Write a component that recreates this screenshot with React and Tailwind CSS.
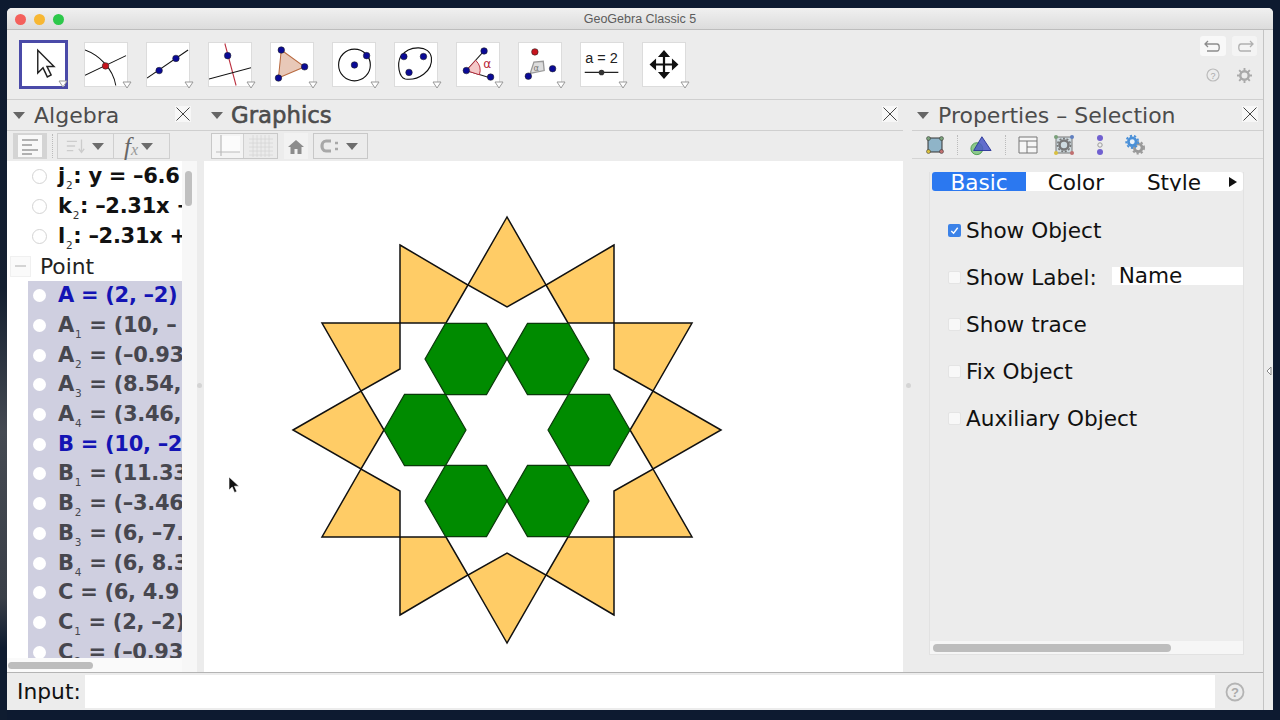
import React from "react";

const Dot = ({ x, y, r = 3.5, f = "#0a0a96" }) => <circle cx={x} cy={y} r={r} fill={f} stroke="#222" strokeWidth="0.6" />;

const ToolIcon = ({ active, children }) => (
  <div className={"relative shrink-0 " + (active ? "w-[49px] h-[49px] -mr-[2px] border-[3px] border-[#4a4aa8] bg-white" : "w-[44px] h-[45px] bg-white border border-[#dcdcdc]")}>
    <svg viewBox="0 0 45 45" className="w-full h-full block">{children}</svg>
    <svg viewBox="0 0 10 8" className={"absolute w-[10px] h-[8px] " + (active ? "right-[-3px] bottom-[-2px]" : "right-[-5px] bottom-[-3px]")}>
      <path d="M1 1H9L5 7Z" fill="#fff" stroke="#999" strokeWidth="1" />
    </svg>
  </div>
);

const tools = [
  <path key="a" d="M17 10V34L22.5 28.5L27 38L31 36L26.6 27H34Z" transform="translate(-0.5 -2.5)" fill="#fff" stroke="#222" strokeWidth="1.5" />,
  <g key="b"><path d="M0 7C14 12 30 26 33 45" fill="none" stroke="#111" strokeWidth="1.1" /><path d="M0 34L44 13" stroke="#111" strokeWidth="1.1" /><Dot x={22} y={24} f="#c8141e" /></g>,
  <g key="c"><path d="M0 37L44 7" stroke="#111" strokeWidth="1.1" /><Dot x={13} y={29} /><Dot x={31} y={16} /></g>,
  <g key="d"><path d="M17 0L29 45" stroke="#b82838" strokeWidth="1.1" /><path d="M0 38L45 26" stroke="#111" strokeWidth="1.1" /><Dot x={20} y={13} /></g>,
  <g key="e"><path d="M11 7L36 25L8 37Z" fill="#e8c8b8" stroke="#b86a40" strokeWidth="1.1" /><Dot x={11} y={7} /><Dot x={36} y={25} /><Dot x={8} y={37} /></g>,
  <g key="f"><circle cx="23" cy="23" r="17" fill="none" stroke="#111" strokeWidth="1.2" /><Dot x={23} y={23} /><Dot x={36} y={13} /></g>,
  <g key="g"><path d="M6 14C16 1 37 2 39 15C41 30 24 40 11 38C4 36 2 22 6 14Z" fill="none" stroke="#111" strokeWidth="1.2" /><Dot x={9.5} y={14} /><Dot x={30.5} y={14} /><Dot x={15} y={31} /></g>,
  <g key="h"><path d="M10 29L29 8M10 29L36 37" stroke="#222" strokeWidth="1.1" /><path d="M10 29L20 18A15 15 0 0 1 24 33.5Z" fill="#f4c8c8" stroke="#b82838" strokeWidth="1" /><Dot x={10} y={29} /><Dot x={29} y={8} /><Dot x={36} y={36} /><text x="28" y="26" fontSize="13" fill="#b82838" fontFamily="DejaVu Sans">α</text></g>,
  <g key="i"><circle cx="17" cy="9" r="3.5" fill="#c8141e" stroke="#222" strokeWidth="0.6" /><path d="M12 32L16 20L26 19L27 29Z" fill="#ddd" stroke="#999" strokeWidth="1.4" /><text x="15.5" y="29" fontSize="9" fill="#777" fontFamily="DejaVu Sans">α</text><Dot x={10} y={35} /><Dot x={36} y={27} /></g>,
  <g key="j"><text x="22" y="21" textAnchor="middle" fontSize="15.5" fill="#222" fontFamily="Liberation Sans">a = 2</text><path d="M4 31H40" stroke="#222" strokeWidth="1.2" /><circle cx="22" cy="31" r="3" fill="#333" /></g>,
  <path key="k" d="M22.5 7L29 14.5H23.7V21.3H31V16L38 22.5L31 29V23.7H23.7V30.5H29L22.5 38L16 30.5H21.3V23.7H14V29L7 22.5L14 16V21.3H21.3V14.5H16Z" fill="#111" />,
];

const Close = ({ className = "" }) => (
  <svg viewBox="0 0 16 16" className={"w-[16px] h-[16px] shrink-0 -mt-[2px] " + className}>
    <rect x="0" y="0" width="16" height="16" fill="#f7f7f7" />
    <path d="M1.5 1.5L14.5 14.5M14.5 1.5L1.5 14.5" stroke="#444" strokeWidth="1" />
  </svg>
);

const Tri = () => (
  <svg viewBox="0 0 12 7" className="w-[12px] h-[7px] shrink-0"><path d="M0 0H12L6 7Z" fill="#666" /></svg>
);

const PanelHeader = ({ title, className = "", textClass = "ml-[9px] text-[22px]" }) => (
  <div className={"h-[31px] flex items-center border-b border-[#cfcfcf] " + className}>
    <Tri />
    <span className={"mt-[1px] leading-none text-[#4c4c4c] font-['DejaVu_Sans',sans-serif] " + textClass}>{title}</span>
    <span className="flex-1" />
    <Close />
  </div>
);

const Sub = ({ n, color }) => (
  <sub className="text-[10.5px] font-normal align-baseline relative top-[6px] mx-[1px]" style={{ color }}>{n}</sub>
);

const rows = [
  { l: "A", v: "= (2, –2)", blue: true },
  { l: "A", n: 1, v: "= (10, –" },
  { l: "A", n: 2, v: "= (–0.93" },
  { l: "A", n: 3, v: "= (8.54," },
  { l: "A", n: 4, v: "= (3.46," },
  { l: "B", v: "= (10, –2", blue: true },
  { l: "B", n: 1, v: "= (11.33" },
  { l: "B", n: 2, v: "= (–3.46" },
  { l: "B", n: 3, v: "= (6, –7." },
  { l: "B", n: 4, v: "= (6, 8.3" },
  { l: "C", v: "= (6, 4.9" },
  { l: "C", n: 1, v: "= (2, –2)" },
  { l: "C", n: 2, v: "= (–0.93" },
];

const topRows = [
  { t: "j", n: 2, v: ": y = –6.6" },
  { t: "k", n: 2, v: ": –2.31x +" },
  { t: "l", n: 2, v: ": –2.31x +" },
];

const Caret = () => (
  <svg viewBox="0 0 12 7" className="w-[12px] h-[7px] shrink-0"><path d="M0 0H12L6 7Z" fill="#6c6c6c" /></svg>
);

const Algebra = () => (
  <div className="w-[197px] shrink-0 flex flex-col">
    <PanelHeader title="Algebra" className="pl-[6px] pr-[13px]" />
    <div className="h-[30px] flex items-center pl-[6px] bg-[#ececec]">
      <div className="w-[34px] h-[26px] bg-[#d4d4d4] flex items-center justify-center">
        <svg viewBox="0 0 24 22" className="w-[24px] h-[22px]"><rect width="24" height="22" fill="#f8f8f8" /><path d="M4 5H20M4 10H14M4 15H20M4 19H14" stroke="#999" strokeWidth="1.4" /></svg>
      </div>
      <span className="ml-[5px] mr-[4px] h-[24px] border-l border-dotted border-[#bbb]" />
      <div className="h-[26px] flex border border-[#cfcfcf]">
        <div className="w-[56px] flex items-center pl-[7px] gap-[5px] border-r border-[#cfcfcf]">
          <svg viewBox="0 0 24 20" className="w-[22px] h-[20px]"><path d="M2 5H13M2 10H11M2 15H9M18 3V16M15 13L18 17L21 13" fill="none" stroke="#ccc" strokeWidth="1.4" /></svg>
          <Caret />
        </div>
        <div className="w-[55px] flex items-center pl-[10px] gap-[3px]">
          <span className="font-['Liberation_Serif',serif] italic text-[25px] text-[#666] leading-none">f<span className="text-[16px] text-[#999]">x</span></span>
          <Caret />
        </div>
      </div>
    </div>
    <div className="flex-1 flex min-h-0">
      <div className="w-[175px] shrink-0 bg-white flex flex-col min-h-0 overflow-hidden">
        <div className="h-[497px] overflow-hidden font-['DejaVu_Sans',sans-serif]">
          {topRows.map((r) => (
            <div key={r.t} className="h-[30px] flex items-center pl-[25px] overflow-hidden whitespace-nowrap">
              <span className="w-[15px] h-[15px] rounded-full border-[1.5px] border-[#d4d4d4] bg-white shrink-0" />
              <span className="ml-[11px] font-bold text-[21px] text-[#111] tracking-[-0.3px] leading-none">{r.t}<Sub n={r.n} color="#333" />{r.v}</span>
            </div>
          ))}
          <div className="h-[30px] flex items-center pl-[3px]">
            <span className="w-[21px] h-[21px] bg-[#fafafa] border border-[#f0f0f0] flex items-center justify-center">
              <span className="w-[11px] h-[2px] bg-[#d4d4d4]" />
            </span>
            <span className="ml-[9px] mt-[1px] text-[21.8px] text-[#222] leading-none">Point</span>
          </div>
          <div className="ml-[21px] bg-[#cfcfe0] overflow-hidden">
            {rows.map((r, i) => (
              <div key={i} className="h-[29.7px] flex items-center pl-[5px] overflow-hidden whitespace-nowrap">
                <span className="w-[13px] h-[13px] rounded-full bg-white shrink-0" />
                <span className={"ml-[12px] font-bold text-[21px] tracking-[-0.3px] leading-none " + (r.blue ? "text-[#1414b4]" : "text-[#47474f]")}>
                  {r.l}{r.n ? <Sub n={r.n} color="#47474f" /> : null} {r.v}
                </span>
              </div>
            ))}
          </div>
        </div>
        <div className="flex-1 flex items-center pl-[1px] bg-[#fafafa]">
          <div className="w-[85px] h-[7px] rounded-full bg-[#bdbdbd]" />
        </div>
      </div>
      <div className="w-[15px] shrink-0 bg-[#f7f7f7] relative">
        <div className="absolute left-[3px] top-[10px] w-[7px] h-[35px] rounded-full bg-[#c0c0c0]" />
      </div>
      <div className="w-[7px] shrink-0 bg-[#ececec] relative">
        <div className="absolute left-[0px] top-[222px] w-[5px] h-[5px] rounded-full bg-[#d4d4d4]" />
      </div>
    </div>
  </div>
);

const hexes = [[466, 359], [548, 359], [425, 430], [589, 430], [466, 501], [548, 501]];
const hexPts = ([x, y]) => [[-41, 0], [-20.5, -35.6], [20.5, -35.6], [41, 0], [20.5, 35.6], [-20.5, 35.6]].map(([a, b]) => `${x + a},${y + b}`).join(" ");
const quarter = [
  [[507, 217], [468, 285], [507, 307], [546, 285]],
  [[400, 245], [468, 285], [446, 323], [400, 323]],
  [[322, 323], [400, 323], [400, 369], [361, 391]],
  [[293, 430], [361, 391], [384, 430], [361, 469]],
];
const kites = [];
quarter.forEach((k, i) => {
  kites.push(k);
  if (i === 1 || i === 2) {
    kites.push(k.map(([x, y]) => [1014 - x, y]));
    kites.push(k.map(([x, y]) => [x, 860 - y]));
    kites.push(k.map(([x, y]) => [1014 - x, 860 - y]));
  }
  if (i === 0) kites.push(k.map(([x, y]) => [x, 860 - y]));
  if (i === 3) kites.push(k.map(([x, y]) => [1014 - x, y]));
});

const Graphics = () => (
  <div className="w-[699px] shrink-0 flex flex-col">
    <PanelHeader title="Graphics" className="pl-[7px] pr-[5px]" textClass="ml-[8px] text-[22.8px] [-webkit-text-stroke:0.6px_#4c4c4c]" />
    <div className="h-[30px] flex items-center pl-[7px] bg-[#ececec]">
      <div className="h-[26px] flex border border-[#c8c8c8]">
        <div className="w-[32px] flex items-center justify-center border-r border-[#d0d0d0] bg-[#f4f4f4]">
          <svg viewBox="0 0 26 22" className="w-[26px] h-[22px]"><rect x="6" y="1" width="19" height="16" fill="#fbfbfb" /><path d="M6 0V21M1 17H25" stroke="#bbb" strokeWidth="1.2" fill="none" /></svg>
        </div>
        <div className="w-[33px] flex items-center justify-center bg-[#ebebeb]">
          <svg viewBox="0 0 24 22" className="w-[24px] h-[22px]"><path d="M0 4H24M0 8H24M0 12H24M0 16H24M0 20H24M4 0V22M8 0V22M12 0V22M16 0V22M20 0V22" stroke="#d6d6d6" strokeWidth="0.8" /></svg>
        </div>
      </div>
      <div className="ml-[6px] w-[24px] h-[26px] flex items-center justify-center bg-[#f2f2f2]">
        <svg viewBox="0 0 16 15" className="w-[16px] h-[15px]"><path d="M8 1L16 8H13.5V15H9.5V10H6.5V15H2.5V8H0Z" fill="#8c8c8c" /></svg>
      </div>
      <div className="ml-[5px] w-[55px] h-[26px] flex items-center pl-[6px] gap-[4px] border border-[#c8c8c8]">
        <svg viewBox="0 0 22 16" className="w-[22px] h-[16px]"><path d="M11 3H6C3 3 2 6 2 8C2 10 3 13 6 13H11" fill="none" stroke="#a8a8a8" strokeWidth="3.2" /><path d="M15 5H18M15 11H18" stroke="#a8a8a8" strokeWidth="2.4" /></svg>
        <Caret />
      </div>
    </div>
    <div className="flex-1 bg-white min-h-0">
      <svg viewBox="204 161 699 511" className="w-full h-full block">
        {kites.map((k, i) => (
          <polygon key={i} points={k.map((p) => p.join(",")).join(" ")} fill="#ffcc66" stroke="#111" strokeWidth="1.5" />
        ))}
        {hexes.map((h, i) => (
          <polygon key={i} points={hexPts(h)} fill="#008b00" stroke="#0a3a0a" strokeWidth="1.2" />
        ))}
      </svg>
    </div>
  </div>
);

const Sep = () => <span className="ml-[13px] mr-[12px] h-[20px] border-l border-dotted border-[#bbb]" />;

const PropIcons = () => (
  <div className="h-[28px] ml-[9px] flex items-center border-b border-[#d4d4d4] pl-[14px]">
    <svg viewBox="0 0 18 18" className="w-[18px] h-[18px]"><rect x="2" y="2" width="14" height="14" fill="#8fb4c8" stroke="#333" /><circle cx="2.5" cy="2.5" r="2" fill="#7aa07a" stroke="#333" strokeWidth="0.5" /><circle cx="15.5" cy="2.5" r="2" fill="#7aa07a" stroke="#333" strokeWidth="0.5" /><circle cx="2.5" cy="15.5" r="2" fill="#d8c040" stroke="#333" strokeWidth="0.5" /><circle cx="15.5" cy="15.5" r="2" fill="#c07070" stroke="#333" strokeWidth="0.5" /></svg>
    <Sep />
    <svg viewBox="0 0 24 22" className="w-[22px] h-[22px]"><circle cx="7.5" cy="15" r="6.5" fill="#8cc88c" stroke="#4a9a4a" /><path d="M13 2L23 17H4Z" fill="#4a58c8" fillOpacity="0.85" stroke="#2a3498" /></svg>
    <Sep />
    <svg viewBox="0 0 20 20" className="w-[20px] h-[20px]"><path d="M1 2H19V18H1ZM1 6H19M9 6V18M9 12H19" fill="#f6f6f6" stroke="#777" /></svg>
    <svg viewBox="0 0 22 22" className="ml-[15px] w-[22px] h-[22px]"><rect x="3" y="3" width="16" height="16" fill="#cfdbe0" stroke="#777" /><circle cx="11" cy="11" r="4.5" fill="none" stroke="#777" strokeWidth="2.6" /><circle cx="11" cy="11" r="6.5" fill="none" stroke="#777" strokeWidth="1.6" strokeDasharray="2 1.6" /><circle cx="3" cy="3" r="2" fill="#7aa07a" /><circle cx="19" cy="3" r="2" fill="#6080c0" /><circle cx="3" cy="19" r="2" fill="#d8c040" /><circle cx="19" cy="19" r="2" fill="#c07070" /></svg>
    <svg viewBox="0 0 8 22" className="ml-[21px] w-[8px] h-[22px]"><circle cx="4" cy="4" r="3" fill="#7060d0" /><circle cx="4" cy="11" r="2.2" fill="#f0f0f0" stroke="#999" /><circle cx="4" cy="18" r="3" fill="#7060d0" /></svg>
    <svg viewBox="0 0 24 24" className="ml-[20px] w-[22px] h-[22px]"><circle cx="15.5" cy="15" r="4.2" fill="none" stroke="#999" strokeWidth="3" /><circle cx="15.5" cy="15" r="6.4" fill="none" stroke="#999" strokeWidth="2" strokeDasharray="2.4 2.2" /><circle cx="9" cy="8.5" r="4.2" fill="#eaf2fa" stroke="#4a90d8" strokeWidth="3" /><circle cx="9" cy="8.5" r="6.6" fill="none" stroke="#4a90d8" strokeWidth="2" strokeDasharray="2.4 2.2" /></svg>
  </div>
);

const Check = ({ on }) =>
  on ? (
    <span className="w-[13px] h-[13px] rounded-[2px] bg-[#3b82e8] flex items-center justify-center shrink-0">
      <svg viewBox="0 0 12 12" className="w-[11px] h-[11px]"><path d="M2.5 6.5L5 9L9.5 3" fill="none" stroke="#fff" strokeWidth="1.5" /></svg>
    </span>
  ) : (
    <span className="w-[13px] h-[13px] rounded-[2px] bg-[#f8f8f8] border border-[#e4e4e4] shrink-0" />
  );

const options = [["Show Object", true], ["Show Label:", false], ["Show trace", false], ["Fix Object", false], ["Auxiliary Object", false]];

const Properties = () => (
  <div className="flex-1 min-w-0 flex flex-col relative">
    <div className="absolute left-[3px] top-[283px] w-[5px] h-[5px] rounded-full bg-[#d4d4d4]" />
    <div className="ml-[9px]"><PanelHeader title="Properties – Selection" className="pl-[5px] pr-[5px]" /></div>
    <PropIcons />
    <div className="flex-1 min-h-0 pl-[26px] pr-[19px] pt-[13px] pb-[17px] flex flex-col">
      <div className="flex-1 min-h-0 flex flex-col border-x border-b border-[#e2e2e2]">
        <div className="h-[19px] ml-[2px] flex bg-white rounded-[3px] overflow-hidden font-['DejaVu_Sans',sans-serif] text-[21.6px] leading-[22px] shrink-0">
          <div className="w-[94px] text-center bg-[#2b78f0] text-white">Basic</div>
          <div className="w-[100px] text-center text-[#111]">Color</div>
          <div className="w-[96px] text-center text-[#111]">Style</div>
          <div className="flex-1 flex items-center pl-[6px]"><svg viewBox="0 0 10 10" className="w-[10px] h-[10px]"><path d="M1 0L9 5L1 10Z" fill="#111" /></svg></div>
        </div>
        <div className="flex-1 min-h-0 pt-[16px] pl-[18px] flex flex-col">
          {options.map(([t, on], i) => (
            <div key={t} className="h-[47px] flex items-center gap-[5px] font-['DejaVu_Sans',sans-serif] text-[21.6px] text-[#111] whitespace-nowrap">
              <Check on={on} />
              <span className="leading-none">{t}</span>
              {i === 1 ? <span className="ml-[10px] flex-1 h-[18px] bg-white leading-[18px] pl-[7px] -mt-[3px]">Name</span> : null}
            </div>
          ))}
        </div>
        <div className="h-[13px] flex items-center bg-[#f6f6f6] shrink-0">
          <div className="w-[238px] h-[8px] rounded-full bg-[#bdbdbd] ml-[3px]" />
        </div>
      </div>
    </div>
  </div>
);

export default function App() {
  return (
    <div className="relative w-[1280px] h-[720px] overflow-hidden pl-[7px] pr-[7px] pt-[8px] pb-[10px] bg-[#0d1a30] bg-no-repeat bg-[length:7px_100%] bg-[linear-gradient(180deg,#0d1a30_0%,#141f30_40%,#454a52_60%,#3a3f48_83%,#0f1c30_90%)]">
      <div className="w-full h-full flex flex-col bg-[#ececec] rounded-t-[5px] overflow-hidden">
        <div className="h-[22px] shrink-0 relative flex items-center justify-center pt-[1px] bg-[linear-gradient(180deg,#f0f0f0,#dcdcdc)] border-b border-[#bdbdbd]">
          <div className="absolute left-[8px] top-[6px] flex gap-[8px]">
            <span className="w-[11px] h-[11px] rounded-full bg-[#f4605c]" />
            <span className="w-[11px] h-[11px] rounded-full bg-[#f7b733]" />
            <span className="w-[11px] h-[11px] rounded-full bg-[#2cc84a]" />
          </div>
          <span className="text-[12.5px] text-[#5c5c5c] font-['Liberation_Sans',sans-serif]">GeoGebra Classic 5</span>
        </div>
        <div className="flex-1 min-h-0 flex">
          <div className="flex-1 min-w-0 flex flex-col border-r border-[#c4c4c4]">
            <div className="h-[70px] shrink-0 flex items-center pl-[12px] border-b border-[#cfcfcf] relative">
              <div className="flex items-center gap-[18px]">
                {tools.map((t, i) => (
                  <ToolIcon key={i} active={i === 0}>{t}</ToolIcon>
                ))}
              </div>
              <div className="absolute right-[6px] top-[6px] grid grid-cols-[26px_25px] gap-x-[6px] gap-y-[12px] justify-items-center">
                <div className="w-[26px] h-[20px] rounded-[3px] bg-[#f8f8f8] flex items-center justify-center">
                  <svg viewBox="0 0 18 12" className="w-[18px] h-[12px]"><path d="M4 1L1 4L4 7M1 4H13C16 4 16 11 13 11H3" fill="none" stroke="#8c8c8c" strokeWidth="1.3" /></svg>
                </div>
                <div className="w-[25px] h-[20px] rounded-[3px] bg-[#f4f4f4] flex items-center justify-center">
                  <svg viewBox="0 0 18 12" className="w-[18px] h-[12px]"><path d="M14 1L17 4L14 7M17 4H5C2 4 2 11 5 11H15" fill="none" stroke="#b0b0b0" strokeWidth="1.3" /></svg>
                </div>
                <svg viewBox="0 0 14 14" className="w-[14px] h-[14px]"><circle cx="7" cy="7" r="6" fill="none" stroke="#bbb" strokeWidth="1.2" /><text x="7" y="10.5" textAnchor="middle" fontSize="9" fill="#aaa" fontFamily="Liberation Sans">?</text></svg>
                <svg viewBox="0 0 16 16" className="w-[15px] h-[15px]"><circle cx="8" cy="8" r="4.5" fill="none" stroke="#aaa" strokeWidth="2.6" /><path d="M8 0V3M8 13V16M0 8H3M13 8H16M2.3 2.3L4.5 4.5M11.5 11.5L13.7 13.7M2.3 13.7L4.5 11.5M11.5 4.5L13.7 2.3" stroke="#aaa" strokeWidth="2" /></svg>
              </div>
            </div>
            <div className="flex-1 min-h-0 flex">
              <Algebra />
              <Graphics />
              <Properties />
            </div>
            <div className="h-[38px] shrink-0 flex items-start border-t border-[#b4b4b4]">
              <span className="w-[78px] pl-[10px] mt-[2px] leading-[33px] text-[21.8px] text-[#111] font-['DejaVu_Sans',sans-serif]">Input:</span>
              <div className="flex-1 h-[33px] mt-[2px] bg-white" />
              <svg viewBox="0 0 20 20" className="ml-[10px] mr-[18px] mt-[9px] w-[20px] h-[20px]"><circle cx="10" cy="10" r="8.5" fill="none" stroke="#b4b4b4" strokeWidth="1.8" /><text x="10" y="14.5" textAnchor="middle" fontSize="13" fontWeight="bold" fill="#aaa" fontFamily="Liberation Sans">?</text></svg>
            </div>
          </div>
          <div className="w-[9px] shrink-0 flex flex-col pt-[336px] pl-[2px]">
            <svg viewBox="0 0 6 10" className="w-[6px] h-[10px]"><path d="M5 1L1 5L5 9Z" fill="#fff" stroke="#888" /></svg>
          </div>
        </div>
      </div>
      <svg viewBox="0 0 12 18" className="absolute left-[228px] top-[476px] w-[12px] h-[18px]"><path d="M1 1V14L4.2 11L6.5 16.5L8.8 15.5L6.5 10.2H11Z" fill="#111" stroke="#fff" strokeWidth="0.6" /></svg>
    </div>
  );
}
